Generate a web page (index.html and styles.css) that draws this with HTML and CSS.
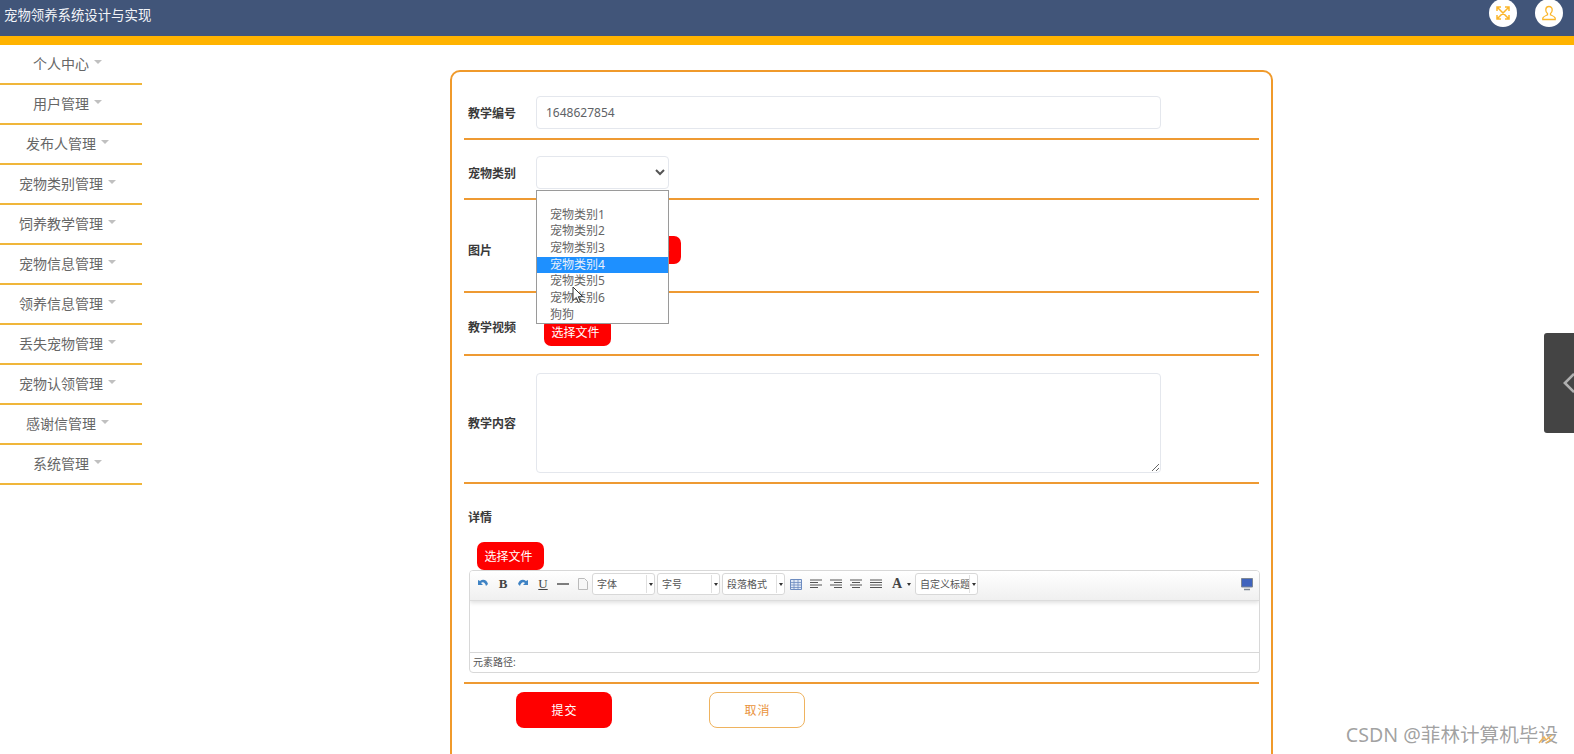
FILE: index.html
```html
<!DOCTYPE html>
<html lang="zh-CN">
<head>
<meta charset="utf-8">
<title>宠物领养系统设计与实现</title>
<link rel="stylesheet" href="styles.css">
</head>
<body>
<header class="topbar">
  <div class="brand">宠物领养系统设计与实现</div>
  <div class="top-actions">
    <span class="round-icon"><svg viewBox="0 0 16 16" width="16" height="16" fill="none" stroke="#fbb62b" stroke-width="1.5"><path d="M2 6V2h4M2 2l12 12M14 10v4h-4M10 2h4v4M14 2L2 14M2 10v4h4"/></svg></span>
    <span class="round-icon"><svg viewBox="0 0 16 16" width="16" height="16" fill="none" stroke="#fbb62b" stroke-width="1.3"><path d="M8 1.5c-2 0-3.2 1.5-3.2 3.5 0 1.500.7 2.800 1.700 3.500v1.300C4.800 10.500 2.500 11.300 1.800 13v1.500h12.400V13c-.7-1.700-3-2.500-4.700-3.200V8.500c1-.7 1.700-2 1.700-3.500C11.200 3 10 1.500 8 1.500z"/></svg></span>
  </div>
</header>
<div class="layout">
  <nav class="sidebar">
    <a class="nav-item">个人中心<i class="caret"></i></a>
    <a class="nav-item">用户管理<i class="caret"></i></a>
    <a class="nav-item">发布人管理<i class="caret"></i></a>
    <a class="nav-item">宠物类别管理<i class="caret"></i></a>
    <a class="nav-item">饲养教学管理<i class="caret"></i></a>
    <a class="nav-item">宠物信息管理<i class="caret"></i></a>
    <a class="nav-item">领养信息管理<i class="caret"></i></a>
    <a class="nav-item">丢失宠物管理<i class="caret"></i></a>
    <a class="nav-item">宠物认领管理<i class="caret"></i></a>
    <a class="nav-item">感谢信管理<i class="caret"></i></a>
    <a class="nav-item">系统管理<i class="caret"></i></a>
  </nav>
  <main class="card">
    <div class="row row-first">
      <label class="label">教学编号</label>
      <input class="text-input" type="text" value="1648627854">
    </div>
    <div class="row row-second">
      <label class="label">宠物类别</label>
      <div class="select-wrap">
        <select class="select"><option></option></select>
        <ul class="dropdown">
          <li>&nbsp;</li>
          <li>宠物类别1</li>
          <li>宠物类别2</li>
          <li>宠物类别3</li>
          <li class="active">宠物类别4</li>
          <li>宠物类别5</li>
          <li>宠物类别6</li>
          <li>狗狗</li>
        </ul>
        <svg class="cursor" viewBox="0 0 12 18" width="12" height="18"><path d="M1 1v13.500l3.300-3 2.200 5 2-.9-2.200-4.900h4.400z" fill="#fff" stroke="#333" stroke-width="1"/></svg>
      </div>
    </div>
    <div class="row row-image">
      <label class="label">图片</label>
      <div class="preview"></div>
      <button class="file-btn">选择文件</button>
    </div>
    <div class="row row-video">
      <label class="label label-video">教学视频</label>
      <button class="file-btn file-btn-video">选择文件</button>
    </div>
    <div class="row">
      <label class="label">教学内容</label>
      <textarea class="textarea"></textarea>
    </div>
    <div class="row row-detail">
      <label class="label label-detail">详情</label>
      <button class="file-btn file-btn-detail">选择文件</button>
      <div class="editor">
        <div class="toolbar">
          <svg class="tool" viewBox="0 0 14 14" width="14" height="14"><path d="M2 3v5h5L5 6c2-1.500 4-.5 5 3l2-2C11 3 7 1.500 4 4z" fill="#3f83c4"/></svg>
          <span class="tool-b">B</span>
          <svg class="tool" viewBox="0 0 14 14" width="14" height="14"><path d="M12 3v5H7l2-2C7 4.500 5 5.500 4 9L2 7c1-4 5-5.500 8-3z" fill="#3f83c4"/></svg>
          <span class="tool-u">U</span>
          <svg class="tool" viewBox="0 0 14 14" width="14" height="14"><path d="M1 7h12" stroke="#555" stroke-width="1.300"/></svg>
          <svg class="tool" viewBox="0 0 14 14" width="14" height="14"><path d="M2.500 1.500h6l3 3v8h-9z" fill="#f7f7f7" stroke="#bbb"/></svg>
          <span class="combo">字体</span>
          <span class="combo">字号</span>
          <span class="combo">段落格式</span>
          <svg class="tool tool-table" viewBox="0 0 14 14" width="14" height="14"><path d="M1.500 2.500h11v10h-11z" fill="#dfe8f5" stroke="#6d8cc0"/><path d="M1.500 5.500h11M1.500 8h11M1.500 10.500h11M5 2.500v10M9 2.500v10" stroke="#6d8cc0" stroke-width=".8"/></svg>
          <svg class="tool" viewBox="0 0 14 14" width="14" height="14"><path d="M1 3h12M1 5.500h8M1 8h12M1 10.500h8" stroke="#555"/></svg>
          <svg class="tool" viewBox="0 0 14 14" width="14" height="14"><path d="M1 3h12M5 5.500h8M1 8h12M5 10.500h8" stroke="#555"/></svg>
          <svg class="tool" viewBox="0 0 14 14" width="14" height="14"><path d="M1 3h12M3 5.500h8M1 8h12M3 10.500h8" stroke="#555"/></svg>
          <svg class="tool" viewBox="0 0 14 14" width="14" height="14"><path d="M1 3h12M1 5.500h12M1 8h12M1 10.500h12" stroke="#555"/></svg>
          <span class="tool-a">A</span>
          <i class="mini-caret"></i>
          <span class="combo combo-wide">自定义标题</span>
          <svg class="tool tool-full" viewBox="0 0 14 14" width="14" height="14"><path d="M1.500 1.500h11v8.500h-11z" fill="#3f63bd" stroke="#7d8794"/><path d="M4 12.500h6" stroke="#7d8794" stroke-width="1.500"/></svg>
        </div>
        <div class="editor-body"></div>
        <div class="statusbar">元素路径:</div>
      </div>
    </div>
    <div class="actions">
      <button class="btn-submit">提交</button>
      <button class="btn-cancel">取消</button>
    </div>
  </main>
</div>
<aside class="side-tab"><svg viewBox="0 0 12 24" width="12" height="24" fill="none" stroke="#b0b0b0" stroke-width="2.800"><path d="M12 2L2 12l10 10"/></svg></aside>
<div class="watermark">CSDN @菲林计算机毕设</div>
<svg class="corner-mark" viewBox="0 0 18 10" width="18" height="10" fill="none" stroke="#eeb35a" stroke-width="1.500"><path d="M2 9l5-6 2 3 6-5M9 9l6-4"/></svg>
</body>
</html>
```

FILE: styles.css
```css
* { box-sizing: border-box; }
html, body { margin: 0; padding: 0; height: 100%; overflow: hidden; }
body {
  background: #fff;
  color: #333;
  font-family: "Noto Sans", "Noto Sans CJK SC", sans-serif;
}

.topbar {
  height: 45px;
  background: #415579;
  border-bottom: 9px solid #ffb300;
  display: flex;
  justify-content: space-between;
  padding: 0 11px 9px 4px;
  align-items: center;
}
.brand { color: #f2f4f8; font-size: 13.400px; font-weight: 400; }
.top-actions { display: flex; gap: 18px; margin-top: -1px; }
.round-icon {
  width: 28px; height: 28px;
  border-radius: 50%;
  background: #fff;
  display: flex; align-items: center; justify-content: center;
}

.layout { display: flex; align-items: flex-start; }
.sidebar { width: 142px; flex: none; }
.nav-item {
  display: flex; align-items: center; justify-content: center;
  height: 40px;
  padding: 0 7px 2px 0;
  border-bottom: 2px solid #f0b63a;
  font-size: 14px;
  color: #666;
}
.caret {
  margin-left: 5px;
  margin-top: -2px;
  border-left: 4px solid transparent;
  border-right: 4px solid transparent;
  border-top: 4px solid #c0c0c0;
}

.card {
  width: 823px;
  margin: 25px 0 0 308px;
  padding: 7px 12px 40px;
  border: 2px solid #f09a2b;
  border-radius: 10px;
  flex: none;
  height: 760px;
}
.row {
  display: flex;
  align-items: center;
  padding: 17px 0 9px 4px;
  border-bottom: 2px solid #ee9a32;
}
.row-first { padding-top: 17px; }
.row-second { padding-top: 16px; }
.label {
  width: 68px;
  flex: none;
  font-size: 12px;
  font-weight: 700;
  color: #3a3a3a;
}
.label-video { margin-top: -10px; }
.text-input {
  width: 625px; height: 33px;
  border: 1px solid #e4e7ed;
  border-radius: 4px;
  padding: 0 9px;
  font: 12px "Noto Sans", sans-serif;
  color: #606266;
  outline: none;
}
.select-wrap { position: relative; width: 133px; }
.select {
  display: block;
  width: 133px; height: 33px;
  border: 1px solid #e4e7ed;
  border-radius: 4px;
  background: #fff;
  color: #555;
  font-size: 12px;
  outline: none;
}
.dropdown {
  position: absolute;
  z-index: 5;
  left: 0; top: 34px;
  width: 133px;
  margin: 0; padding: 0;
  list-style: none;
  background: #fff;
  border: 1px solid #9a9a9a;
  font-size: 12px;
  color: #666;
}
.dropdown li {
  height: 16.660px;
  line-height: 16.660px;
  padding-left: 13px;
  white-space: nowrap;
}
.dropdown li:first-child { height: 15.700px; }
.dropdown .active { background: #1e90ff; color: #e8f1fb; }
.cursor { position: absolute; z-index: 6; left: 36px; top: 130px; }

.row-image { height: 93px; }
.preview { width: 78px; height: 1px; flex: none; }
.file-btn {
  width: 67px; height: 28px;
  border: 0;
  border-radius: 7px;
  background: #f00;
  color: #fff;
  font: 12px "Noto Sans", "Noto Sans CJK SC", sans-serif;
  padding: 0 4px 0 0;
}
.row-video { height: 63px; padding-top: 25px; padding-bottom: 8px; }
.file-btn-video { margin-left: 8px; }
.textarea {
  width: 625px; height: 100px;
  border: 1px solid #e4e7ed;
  border-radius: 4px;
  outline: none;
  display: block;
}

.row-detail {
  display: block;
  padding-top: 17px;
}
.label-detail { display: block; line-height: 34px; width: auto; }
.file-btn-detail { display: block; margin: 7px 0 0 9px; }
.editor {
  margin-left: 1px;
  width: 791px;
  height: 103px;
  border: 1px solid #d8d8d8;
  border-radius: 4px;
  display: flex;
  flex-direction: column;
  overflow: hidden;
}
.toolbar {
  height: 30px;
  flex: none;
  display: flex;
  align-items: center;
  padding: 0 0 3px 6px;
  gap: 6px;
  background: linear-gradient(#fff, #f0f0f0);
  border-bottom: 1px solid #dcdcdc;
  box-shadow: 0 2px 4px rgba(0,0,0,.12);
  position: relative;
}
.tool { flex: none; }
.tool-b, .tool-a, .tool-u {
  width: 14px;
  text-align: center;
  font: 700 13px "Liberation Serif", serif;
  color: #444;
}
.tool-u { text-decoration: underline; font-weight: 400; }
.tool-a { font-size: 14px; width: 10px; margin-left: 3px; }
.combo {
  width: 63px; height: 22px;
  flex: none;
  margin-left: -4px;
  margin-right: 3px;
  border: 1px solid #d8d8d8;
  border-radius: 3px;
  background: #fff;
  font-size: 10px;
  line-height: 20px;
  padding-left: 4px;
  color: #555;
  position: relative;
}
.combo::after {
  content: "";
  position: absolute;
  right: 1px; top: 9px;
  border-left: 2.500px solid transparent;
  border-right: 2.500px solid transparent;
  border-top: 3px solid #333;
}
.combo::before {
  content: "";
  position: absolute;
  right: 7px; top: 1px; bottom: 1px;
  border-right: 1px solid #e0e0e0;
}
.combo + .combo { margin-left: -7px; }
.tool-table { margin-left: -5px; }
.mini-caret {
  flex: none;
  margin-left: -1px;
  border-left: 2.500px solid transparent;
  border-right: 2.500px solid transparent;
  border-top: 3px solid #333;
}
.combo-wide { margin-left: -2px; overflow: hidden; white-space: nowrap; }
.tool-full { margin-left: auto; margin-right: 5px; }
.editor-body { flex: 1; background: #fff; }
.statusbar {
  height: 20px;
  flex: none;
  border-top: 1px solid #d8d8d8;
  font-size: 10px;
  line-height: 19px;
  padding-left: 3px;
  color: #555;
}

.actions {
  display: flex;
  gap: 97px;
  padding: 8px 0 0 52px;
}
.btn-submit, .btn-cancel {
  width: 96px; height: 36px;
  border-radius: 8px;
  font: 12px "Noto Sans", "Noto Sans CJK SC", sans-serif;
  padding: 0 0 0 1px;
}
.btn-submit { background: #f00; border: 0; color: #fff; letter-spacing: 1px; }
.btn-cancel { background: #fff; border: 1px solid #efb35f; color: #e9923a; letter-spacing: 1px; }

.side-tab {
  position: absolute;
  right: 0; top: 333px;
  width: 30px; height: 100px;
  background: #444;
  border-radius: 3px 0 0 3px;
  display: flex; align-items: center;
  padding-left: 19px;
}
.watermark {
  position: absolute;
  right: 16px; bottom: 6px;
  font-size: 19.600px;
  line-height: 26px;
  color: rgba(120,120,120,.7);
  font-family: "Noto Sans", "Noto Sans CJK SC", sans-serif;
  white-space: nowrap;
}
.corner-mark { position: absolute; right: 19px; bottom: 10px; }
```
